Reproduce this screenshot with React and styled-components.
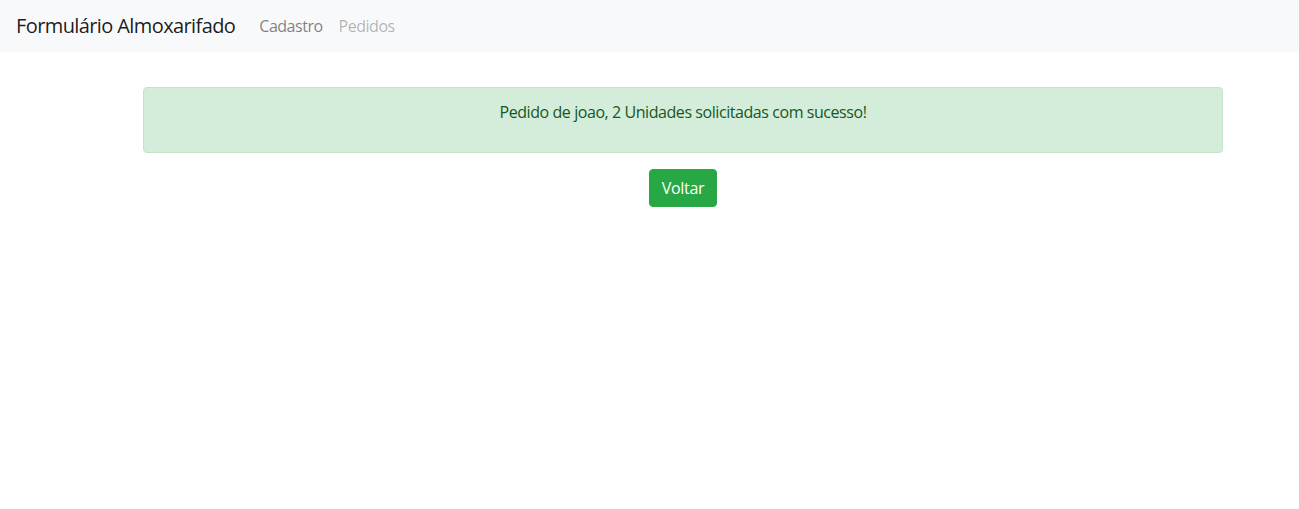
import React from "react";
import styled, { createGlobalStyle } from "styled-components";

const Global = createGlobalStyle`
  html, body { margin: 0; padding: 0; background: #fff; }
  body {
    font-family: "Open Sans", "Noto Sans", "Liberation Sans", sans-serif;
    font-size: 16px;
    line-height: 1.5;
    letter-spacing: -0.027em;
    color: #212529;
  }
  * { box-sizing: border-box; }
`;

const Navbar = styled.nav`
  display: flex;
  align-items: center;
  height: 52px;
  padding: 0 16px;
  background: #f8f9fa;
`;

const Brand = styled.a`
  font-size: 20px;
  line-height: 30px;
  letter-spacing: -0.03em;
  color: rgba(0, 0, 0, 0.9);
  margin-right: 16px;
  text-decoration: none;
`;

const NavList = styled.div`
  display: flex;
`;

const NavLink = styled.a`
  padding: 8px;
  font-size: 16px;
  letter-spacing: -0.03em;
  text-decoration: none;
  color: ${(p) => (p.$disabled ? "rgba(0,0,0,0.3)" : "rgba(0,0,0,0.5)")};
`;

const Main = styled.main`
  display: flex;
  flex-direction: column;
  align-items: center;
  padding: 35px 76px 0 143px;
`;

const Alert = styled.div`
  width: 1080px;
  padding: 12px 20px;
  background: #d4edda;
  border: 1px solid #c3e6cb;
  border-radius: 4px;
  color: #155724;
  text-align: center;
`;

const AlertText = styled.p`
  margin: 0 0 16px;
`;

const Button = styled.button`
  margin-top: 16px;
  font-family: inherit;
  font-size: 16px;
  line-height: 24px;
  letter-spacing: -0.02em;
  padding: 6px 12px;
  border: 1px solid #28a745;
  border-radius: 4px;
  background: #28a745;
  color: #fff;
  cursor: pointer;
`;

export default function App() {
  return (
    <>
      <Global />
      <Navbar>
        <Brand href="#">Formulário Almoxarifado</Brand>
        <NavList>
          <NavLink href="#">Cadastro</NavLink>
          <NavLink href="#" $disabled>Pedidos</NavLink>
        </NavList>
      </Navbar>
      <Main>
        <Alert>
          <AlertText>Pedido de joao, 2 Unidades solicitadas com sucesso!</AlertText>
        </Alert>
        <Button>Voltar</Button>
      </Main>
    </>
  );
}
